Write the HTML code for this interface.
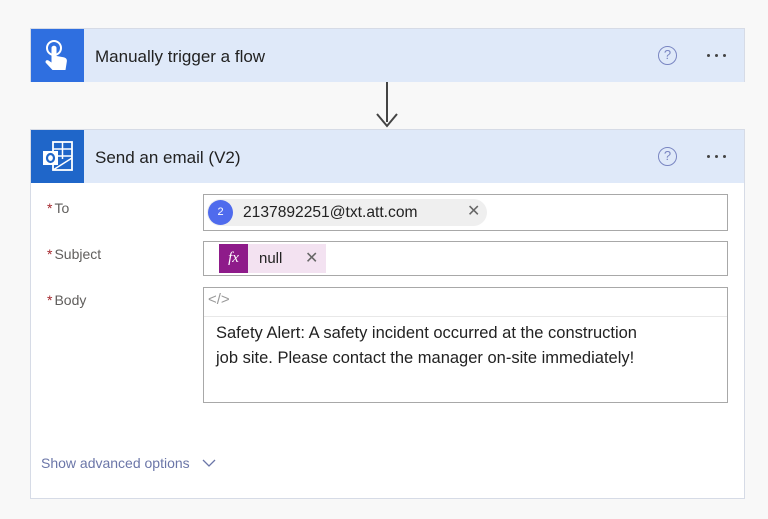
<!DOCTYPE html>
<html><head><meta charset="utf-8"><style>
*{margin:0;padding:0;box-sizing:border-box}
body{width:768px;height:519px;background:#f8f8f8;font-family:"Segoe UI","Liberation Sans",sans-serif;position:relative;overflow:hidden;color:#323130}
.card{position:absolute;left:30px;width:715px;border:1px solid #d6dbe6;background:#fff}
.hdr{height:53px;background:#dfe9f9;position:relative}
.ic{position:absolute;left:0;top:0;width:53px;height:53px;display:flex;align-items:center;justify-content:center}
.title{position:absolute;left:64px;top:18px;font-size:17px;color:#222}
.q{position:absolute;left:627px;top:17px;width:19px;height:19px;border:1.5px solid #7a86c2;border-radius:50%;color:#7a86c2;font-size:13px;text-align:center;line-height:16px}
.dots{position:absolute;left:676px;top:25px;display:flex;gap:5px}
.dots i{display:block;width:3px;height:3px;background:#444;border-radius:50%}
.lbl{position:absolute;left:16px;font-size:14px;color:#605e5c}
.lbl b{color:#a4262c;font-weight:normal;margin-right:2px}
.box{position:absolute;left:172px;width:525px;border:1px solid #a8a8a8;background:#fff}
</style></head><body>
<div class="card" style="top:28px;height:54px">
 <div class="hdr">
  <div class="ic" style="background:#2f6fe0"><svg width="30" height="34" viewBox="0 0 30 34"><circle cx="11" cy="9" r="7" fill="none" stroke="#fff" stroke-width="2"/><path d="M8.5 9c0-3 5-3 5 0v8l7 1.2c2.5.5 3.8 2 3.3 4.5L22.5 31H9.5L3 24c-1.3-1.5.3-3.8 2.3-2.6L8.5 23.5z" fill="#fff"/></svg></div>
  <div class="title">Manually trigger a flow</div>
  <div class="q">?</div><div class="dots"><i></i><i></i><i></i></div>
 </div>
</div>
<div style="position:absolute;left:386px;top:82px;width:2px;height:40px;background:#444"></div>
<svg style="position:absolute;left:376px;top:110px" width="22" height="18"><path d="M1 4l10 12 10-12" fill="none" stroke="#444" stroke-width="2"/></svg>
<div class="card" style="top:129px;height:370px">
 <div class="hdr">
  <div class="ic" style="background:#1f66c9"><svg width="34" height="32" viewBox="0 0 34 32"><rect x="12" y="1" width="19" height="28" fill="none" stroke="#fff" stroke-width="1.8"/><path d="M12 8h19M12 15h19M21.5 1v17" stroke="#fff" stroke-width="1.5"/><path d="M12 29l19-12" stroke="#fff" stroke-width="1.5"/><rect x="2" y="10" width="15" height="14" fill="#fff"/><ellipse cx="9.5" cy="17" rx="3.5" ry="4" fill="none" stroke="#1f66c9" stroke-width="2.2"/></svg></div>
  <div class="title">Send an email (V2)</div>
  <div class="q">?</div><div class="dots"><i></i><i></i><i></i></div>
 </div>
 <div class="lbl" style="top:70px"><b>*</b>To</div>
 <div class="box" style="top:64px;height:37px">
  <div style="position:absolute;left:3px;top:4px;width:280px;height:27px;background:#efefef;border-radius:14px">
   <div style="position:absolute;left:1px;top:1px;width:25px;height:25px;border-radius:50%;background:#4f6bed;color:#fff;font-size:11px;text-align:center;line-height:25px">2</div>
   <div style="position:absolute;left:36px;top:5px;font-size:15.6px;color:#222">2137892251@txt.att.com</div>
   <div style="position:absolute;left:260px;top:2px;font-size:16px;color:#666">✕</div>
  </div>
 </div>
 <div class="lbl" style="top:116px"><b>*</b>Subject</div>
 <div class="box" style="top:111px;height:35px">
  <div style="position:absolute;left:15px;top:2px;width:107px;height:29px;background:#f3e2f1">
   <div style="position:absolute;left:0;top:0;width:29px;height:29px;background:#8e1b8a;color:#fff;font-family:'Liberation Serif',serif;font-style:italic;font-size:15px;text-align:center;line-height:28px">fx</div>
   <div style="position:absolute;left:40px;top:6px;font-size:15px;color:#222">null</div>
   <div style="position:absolute;left:86px;top:4px;font-size:16px;color:#666">✕</div>
  </div>
 </div>
 <div class="lbl" style="top:162px"><b>*</b>Body</div>
 <div class="box" style="top:157px;height:116px">
  <div style="height:29px;border-bottom:1px solid #e8e8e8;font-size:15px;color:#999;padding:3px 0 0 4px">&lt;/&gt;</div>
  <div style="padding:4px 0 0 12px;font-size:16.5px;line-height:25px;color:#222">Safety Alert: A safety incident occurred at the construction<br>job site. Please contact the manager on-site immediately!</div>
 </div>
 <div style="position:absolute;left:10px;top:325px;font-size:14px;color:#6b76a8">Show advanced options <svg width="14" height="10" style="margin-left:8px"><path d="M1 2l6 6 6-6" fill="none" stroke="#6b76a8" stroke-width="1.3"/></svg></div>
</div>
</body></html>
